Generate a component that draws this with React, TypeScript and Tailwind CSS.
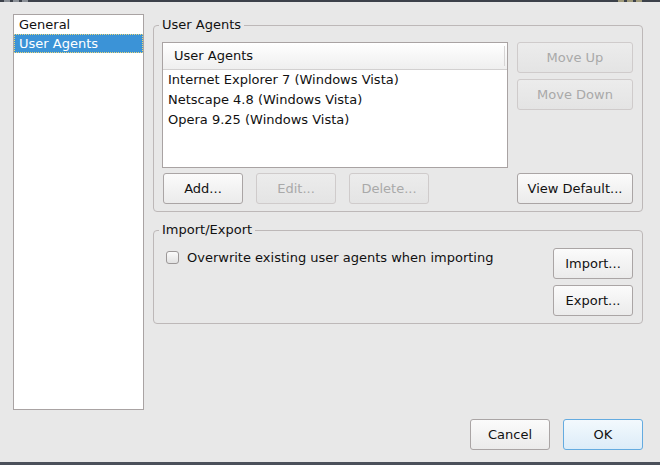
import React from 'react';

type BtnProps = { label: string; disabled?: boolean; primary?: boolean; className?: string };

function Button({ label, disabled, primary, className = '' }: BtnProps) {
  const look = primary
    ? 'border-[#64abe0] bg-gradient-to-b from-[#f3f9fd] to-[#dcecf8] text-[#111]'
    : disabled
      ? 'border-[#cfcbcb] bg-gradient-to-b from-[#ececec] to-[#e4e4e4] text-[#a9a9a9]'
      : 'border-[#aaa5a5] bg-gradient-to-b from-[#fbfbfb] to-[#ebebeb] text-[#111]';
  return (
    <button
      disabled={disabled}
      className={`flex h-[31px] items-center justify-center rounded-[3px] border ${look} ${className}`}
    >
      {label}
    </button>
  );
}

const agents = ['Internet Explorer 7 (Windows Vista)', 'Netscape 4.8 (Windows Vista)', 'Opera 9.25 (Windows Vista)'];

export default function App() {
  return (
    <div
      className="flex h-[465px] w-[660px] flex-col overflow-hidden bg-[#e8e8e8] text-[13px] leading-[16px] text-[#111]"
      style={{ fontFamily: '"DejaVu Sans", Verdana, sans-serif' }}
    >
      {/* window frame strip */}
      <div className="flex h-[2px] shrink-0 justify-between bg-[#3c414a]">
        <div className="ml-[4px] flex gap-[3px]">
          <span className="h-[2px] w-[6px] bg-[#8a8f96]" />
          <span className="h-[2px] w-[6px] bg-[#8a8f96]" />
          <span className="h-[2px] w-[6px] bg-[#8a8f96]" />
        </div>
        <div className="mr-[18px] flex gap-[3px]">
          <span className="h-[2px] w-[6px] bg-[#a09a7a]" />
          <span className="h-[2px] w-[6px] bg-[#a09a7a]" />
          <span className="h-[2px] w-[6px] bg-[#a09a7a]" />
        </div>
      </div>

      <div className="flex flex-1 flex-col">
        <div className="flex pt-[12px]">
          {/* page list */}
          <div className="ml-[13px] h-[396px] w-[131px] border border-[#a9a3a3] bg-white">
            <div className="flex h-[19px] items-center pl-[5px]">General</div>
            <div className="flex h-[19px] items-center border border-dotted border-[#e8d77a] bg-[#3b93d7] pl-[4px] text-white">
              User Agents
            </div>
          </div>

          <div className="ml-[9px] flex w-[490px] flex-col pt-[3px]">
            <fieldset className="rounded-[4px] border border-[#bdb8b8] pb-[7px] pl-[8px] pr-[9px]">
              <legend className="-ml-[3px] px-[3px]">User Agents</legend>
              <div className="mt-[9px] flex">
                <div className="h-[126px] w-[346px] border border-[#a9a3a3] bg-white">
                  <div className="flex h-[27px] items-center justify-between border-b border-[#d2d0d0] bg-gradient-to-b from-[#ffffff] to-[#efefef] pl-[11px]">
                    <span>User Agents</span>
                    <span className="mr-[2px] h-[20px] w-px bg-[#d6d4d4]" />
                  </div>
                  <div>
                    {agents.map((a) => (
                      <div key={a} className="flex h-[20px] items-center pl-[5px]">
                        {a}
                      </div>
                    ))}
                  </div>
                </div>
                <div className="ml-[9px] flex flex-col gap-[6px]">
                  <Button label="Move Up" disabled className="w-[116px]" />
                  <Button label="Move Down" disabled className="w-[116px]" />
                </div>
              </div>
              <div className="mt-[5px] flex">
                <Button label="Add..." className="ml-px w-[80px]" />
                <Button label="Edit..." disabled className="ml-[13px] w-[80px]" />
                <Button label="Delete..." disabled className="ml-[13px] w-[80px]" />
                <Button label="View Default..." className="ml-auto w-[116px]" />
              </div>
            </fieldset>

            <fieldset className="mt-[10px] rounded-[4px] border border-[#bdb8b8] pb-[7px] pl-[8px] pr-[9px]">
              <legend className="-ml-[3px] px-[3px]">Import/Export</legend>
              <div className="mt-[10px] flex">
                <label className="mt-[3px] flex h-[13px] items-center">
                  <span className="ml-[4px] h-[13px] w-[13px] rounded-[3px] border border-[#9c9898] bg-gradient-to-b from-[#fbfbfb] to-[#e2e2e2]" />
                  <span className="ml-[8px]">Overwrite existing user agents when importing</span>
                </label>
                <div className="ml-auto flex flex-col gap-[6px]">
                  <Button label="Import..." className="w-[80px]" />
                  <Button label="Export..." className="w-[80px]" />
                </div>
              </div>
            </fieldset>
          </div>
        </div>

        {/* dialog buttons */}
        <div className="mr-[17px] mt-[9px] flex justify-end gap-[13px]">
          <Button label="Cancel" className="w-[80px]" />
          <Button label="OK" primary className="w-[80px]" />
        </div>
      </div>

      <div className="h-[3px] shrink-0 bg-[#4b505a]" />
    </div>
  );
}
